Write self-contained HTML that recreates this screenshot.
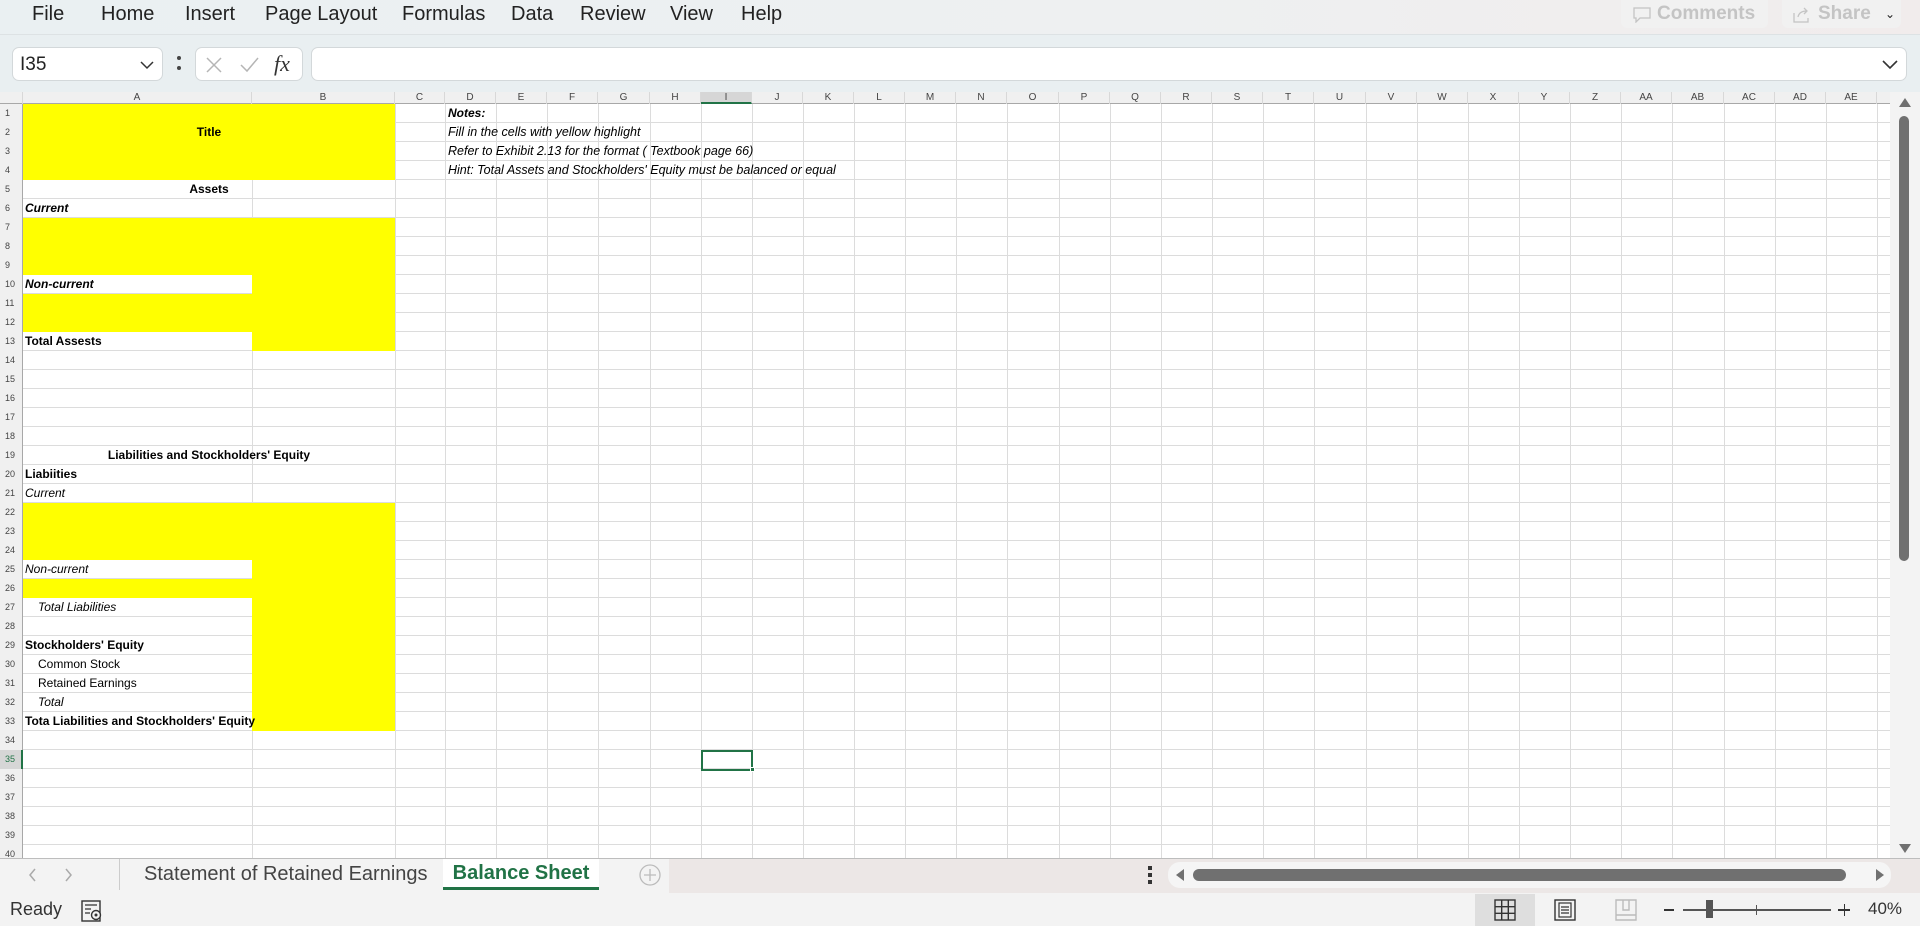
<!DOCTYPE html>
<html><head><meta charset="utf-8"><style>
*{box-sizing:border-box;margin:0;padding:0}
body{width:1920px;height:926px;overflow:hidden;position:relative;background:#e9eff1;font-family:"Liberation Sans",sans-serif}
.a{position:absolute}
.menu{top:0;left:0;width:1920px;height:35px;background:linear-gradient(90deg,#eaf0f2,#eef0f1 60%,#f1ecec);border-bottom:1px solid #dde2e4}
.menu span{position:absolute;top:3px;font-size:20px;color:#222}
.box{background:#fff;border:1px solid #d3d8da;border-radius:7px}
.sheet{left:0;top:92px;width:1890px;height:766px;background:#fff;overflow:hidden}
.hgrid{left:23px;top:12px;width:1867px;height:754px;background:repeating-linear-gradient(to bottom,transparent 0 18px,#dcdcdc 18px 19px)}
.vl{top:12px;width:1px;height:754px;background:#dcdcdc}
.ch{top:0;height:12px;background:#f0f0f0;border-bottom:1px solid #a8a8a8;left:0;width:1890px}
.cl{position:absolute;top:0;height:12px;font-size:10px;color:#444;text-align:center;line-height:12px;border-right:1px solid #d8d8d8}
.rh{left:0;top:12px;width:23px;height:754px;background:#f0f0f0;border-right:1px solid #a8a8a8}
.rn{position:absolute;left:5px;font-size:9px;color:#444;line-height:19px}
.y{background:#ff0;position:absolute}
.t{position:absolute;font-size:12px;line-height:19px;color:#000;white-space:nowrap}
.b{font-weight:bold}.i{font-style:italic}
</style></head><body>
<div class="a menu">
<span style="left:32px">File</span><span style="left:101px">Home</span><span style="left:185px">Insert</span><span style="left:265px">Page Layout</span><span style="left:402px">Formulas</span><span style="left:511px">Data</span><span style="left:580px">Review</span><span style="left:670px">View</span><span style="left:741px">Help</span>
<div class="a" style="left:1621px;top:0;width:147px;height:28px;background:#f1f1f1;border-radius:0 0 6px 6px;color:#c4c4c4;font-size:19px;font-weight:bold;line-height:28px;padding-left:36px">Comments<svg class="a" style="left:12px;top:7px" width="18" height="16" viewBox="0 0 18 16"><path d="M1 1h16v10H7l-4 4v-4H1z" fill="none" stroke="#c4c4c4" stroke-width="1.3"/></svg></div>
<div class="a" style="left:1782px;top:0;width:119px;height:28px;background:#f1f1f1;border-radius:0 0 6px 6px;color:#c4c4c4;font-size:19px;font-weight:bold;line-height:28px;padding-left:36px">Share<span style="position:absolute;left:103px;top:0;font-size:12px;font-weight:normal">&#8964;</span><svg class="a" style="left:11px;top:7px" width="18" height="16" viewBox="0 0 18 16"><path d="M1 6v9h14v-4M5 10c1-5 5-6 9-6M11 1l3 3-3 3" fill="none" stroke="#c4c4c4" stroke-width="1.3"/></svg></div>
</div>
<div class="a box" style="left:12px;top:47px;width:151px;height:34px"><span class="a" style="left:7px;top:6px;font-size:19px;color:#222">I35</span><svg class="a" style="left:127px;top:12px" width="14" height="10"><path d="M1 2l6 6 6-6" fill="none" stroke="#333" stroke-width="1.5"/></svg></div>
<div class="a" style="left:177px;top:56px;width:4px;height:4px;background:#444;border-radius:2px"></div><div class="a" style="left:177px;top:66px;width:4px;height:4px;background:#444;border-radius:2px"></div>
<div class="a box" style="left:195px;top:47px;width:108px;height:34px">
<svg class="a" style="left:9px;top:8px" width="18" height="18"><path d="M2 2l14 14M16 2L2 16" stroke="#b5b5b5" stroke-width="1.5"/></svg>
<svg class="a" style="left:43px;top:8px" width="20" height="18"><path d="M2 9l6 6L19 2" fill="none" stroke="#b5b5b5" stroke-width="1.5"/></svg>
<span class="a" style="left:78px;top:3px;font-family:'Liberation Serif',serif;font-style:italic;font-size:22px;color:#333">fx</span></div>
<div class="a box" style="left:311px;top:47px;width:1596px;height:34px"><svg class="a" style="left:1570px;top:12px" width="16" height="10"><path d="M1 1l7 7 7-7" fill="none" stroke="#333" stroke-width="1.6"/></svg></div>

<div class="a sheet">
<div class="a hgrid"></div>
<div class="a vl" style="left:252px"></div><div class="a vl" style="left:395px"></div><div class="a vl" style="left:445px"></div>
<div class="a vl" style="left:496px"></div><div class="a vl" style="left:547px"></div><div class="a vl" style="left:598px"></div><div class="a vl" style="left:650px"></div><div class="a vl" style="left:701px"></div><div class="a vl" style="left:752px"></div><div class="a vl" style="left:803px"></div><div class="a vl" style="left:854px"></div><div class="a vl" style="left:905px"></div><div class="a vl" style="left:956px"></div><div class="a vl" style="left:1007px"></div><div class="a vl" style="left:1059px"></div><div class="a vl" style="left:1110px"></div><div class="a vl" style="left:1161px"></div><div class="a vl" style="left:1212px"></div><div class="a vl" style="left:1263px"></div><div class="a vl" style="left:1314px"></div><div class="a vl" style="left:1366px"></div><div class="a vl" style="left:1417px"></div><div class="a vl" style="left:1468px"></div><div class="a vl" style="left:1519px"></div><div class="a vl" style="left:1570px"></div><div class="a vl" style="left:1621px"></div><div class="a vl" style="left:1672px"></div><div class="a vl" style="left:1724px"></div><div class="a vl" style="left:1775px"></div><div class="a vl" style="left:1826px"></div><div class="a vl" style="left:1877px"></div>
<div class="y" style="left:23px;top:12px;width:372px;height:76px"></div>
<div class="y" style="left:23px;top:126px;width:372px;height:57px"></div>
<div class="y" style="left:252px;top:183px;width:143px;height:76px"></div>
<div class="y" style="left:23px;top:202px;width:229px;height:38px"></div>
<div class="y" style="left:23px;top:411px;width:372px;height:57px"></div>
<div class="y" style="left:252px;top:468px;width:143px;height:171px"></div>
<div class="y" style="left:23px;top:487px;width:229px;height:19px"></div>
<div class="t b" style="left:23px;width:372px;text-align:center;top:31px">Title</div>
<div class="t b" style="left:23px;width:372px;text-align:center;top:88px">Assets</div>
<div class="t b i" style="left:25px;top:107px">Current</div>
<div class="t b i" style="left:25px;top:183px">Non-current</div>
<div class="t b" style="left:25px;top:240px">Total Assests</div>
<div class="t b" style="left:23px;width:372px;text-align:center;top:354px">Liabilities and Stockholders' Equity</div>
<div class="t b" style="left:25px;top:373px">Liabiities</div>
<div class="t i" style="left:25px;top:392px">Current</div>
<div class="t i" style="left:25px;top:468px">Non-current</div>
<div class="t i" style="left:38px;top:506px">Total Liabilities</div>
<div class="t b" style="left:25px;top:544px">Stockholders' Equity</div>
<div class="t" style="left:38px;top:563px">Common Stock</div>
<div class="t" style="left:38px;top:582px">Retained Earnings</div>
<div class="t i" style="left:38px;top:601px">Total</div>
<div class="t b" style="left:25px;top:620px">Tota Liabilities and Stockholders' Equity</div>
<div class="t b i" style="left:448px;top:12px">Notes:</div>
<div class="t i" style="left:448px;top:31px;font-size:12.5px">Fill in the cells with yellow highlight</div>
<div class="t i" style="left:448px;top:50px;font-size:12.5px">Refer to Exhibit 2.13 for the format ( Textbook page 66)</div>
<div class="t i" style="left:448px;top:69px;font-size:12.5px">Hint: Total Assets and Stockholders' Equity must be balanced or equal</div>
<div class="a" style="left:701px;top:658px;width:52px;height:21px;border:2px solid #217346"></div>
<div class="a" style="left:750px;top:675px;width:5px;height:5px;background:#217346;border:1px solid #fff"></div>
<div class="a ch">
<div class="cl" style="left:0;width:23px"></div>
<div class="cl" style="left:23px;width:229px">A</div><div class="cl" style="left:252px;width:143px">B</div><div class="cl" style="left:395px;width:50px">C</div>
<div class="cl" style="left:445px;width:51px">D</div><div class="cl" style="left:496px;width:51px">E</div><div class="cl" style="left:547px;width:51px">F</div><div class="cl" style="left:598px;width:52px">G</div><div class="cl" style="left:650px;width:51px">H</div><div class="cl" style="left:701px;width:51px;background:#d6d6d6;border-bottom:2px solid #217346">I</div><div class="cl" style="left:752px;width:51px">J</div><div class="cl" style="left:803px;width:51px">K</div><div class="cl" style="left:854px;width:51px">L</div><div class="cl" style="left:905px;width:51px">M</div><div class="cl" style="left:956px;width:51px">N</div><div class="cl" style="left:1007px;width:52px">O</div><div class="cl" style="left:1059px;width:51px">P</div><div class="cl" style="left:1110px;width:51px">Q</div><div class="cl" style="left:1161px;width:51px">R</div><div class="cl" style="left:1212px;width:51px">S</div><div class="cl" style="left:1263px;width:51px">T</div><div class="cl" style="left:1314px;width:52px">U</div><div class="cl" style="left:1366px;width:51px">V</div><div class="cl" style="left:1417px;width:51px">W</div><div class="cl" style="left:1468px;width:51px">X</div><div class="cl" style="left:1519px;width:51px">Y</div><div class="cl" style="left:1570px;width:51px">Z</div><div class="cl" style="left:1621px;width:51px">AA</div><div class="cl" style="left:1672px;width:52px">AB</div><div class="cl" style="left:1724px;width:51px">AC</div><div class="cl" style="left:1775px;width:51px">AD</div><div class="cl" style="left:1826px;width:51px">AE</div>
</div>
<div class="a rh">
<div class="rn" style="top:0">1</div><div class="rn" style="top:19px">2</div><div class="rn" style="top:38px">3</div><div class="rn" style="top:57px">4</div><div class="rn" style="top:76px">5</div><div class="rn" style="top:95px">6</div><div class="rn" style="top:114px">7</div><div class="rn" style="top:133px">8</div><div class="rn" style="top:152px">9</div><div class="rn" style="top:171px">10</div><div class="rn" style="top:190px">11</div><div class="rn" style="top:209px">12</div><div class="rn" style="top:228px">13</div><div class="rn" style="top:247px">14</div><div class="rn" style="top:266px">15</div><div class="rn" style="top:285px">16</div><div class="rn" style="top:304px">17</div><div class="rn" style="top:323px">18</div><div class="rn" style="top:342px">19</div><div class="rn" style="top:361px">20</div><div class="rn" style="top:380px">21</div><div class="rn" style="top:399px">22</div><div class="rn" style="top:418px">23</div><div class="rn" style="top:437px">24</div><div class="rn" style="top:456px">25</div><div class="rn" style="top:475px">26</div><div class="rn" style="top:494px">27</div><div class="rn" style="top:513px">28</div><div class="rn" style="top:532px">29</div><div class="rn" style="top:551px">30</div><div class="rn" style="top:570px">31</div><div class="rn" style="top:589px">32</div><div class="rn" style="top:608px">33</div><div class="rn" style="top:627px">34</div><div class="a" style="left:0;top:646px;width:23px;height:19px;background:#d6d6d6;border-right:2px solid #217346"></div><div class="rn" style="top:646px;color:#217346">35</div><div class="rn" style="top:665px">36</div><div class="rn" style="top:684px">37</div><div class="rn" style="top:703px">38</div><div class="rn" style="top:722px">39</div><div class="rn" style="top:741px">40</div>
</div>
</div>
<div class="a" style="left:1890px;top:92px;width:30px;height:766px;background:#f3f3f3"></div>
<svg class="a" style="left:1898px;top:96px" width="14" height="12"><path d="M1 11L7 2l6 9z" fill="#707070"/></svg>
<div class="a" style="left:1899px;top:116px;width:10px;height:445px;background:#707070;border-radius:5px"></div>
<svg class="a" style="left:1898px;top:843px" width="14" height="12"><path d="M1 1h12L7 10z" fill="#707070"/></svg>
<div class="a" style="left:0;top:858px;width:1920px;height:35px;background:#ece7e6;border-top:1px solid #bdbdbd"></div>
<div class="a" style="left:0;top:859px;width:669px;height:34px;background:#f3f3f3"></div>
<svg class="a" style="left:26px;top:868px" width="50" height="14"><path d="M9 1L4 7l5 6M40 1l5 6-5 6" fill="none" stroke="#aaa" stroke-width="1.5"/></svg>
<div class="a" style="left:119px;top:859px;width:324px;height:31px;border-left:1px solid #ccc;font-size:20px;color:#444;line-height:30px;padding-left:24px">Statement of Retained Earnings</div>
<div class="a" style="left:443px;top:859px;width:156px;height:31px;background:#fff;border-bottom:3px solid #217346;font-size:20px;font-weight:bold;color:#217346;line-height:29px;text-align:center">Balance Sheet</div>
<svg class="a" style="left:639px;top:864px" width="22" height="22"><circle cx="11" cy="11" r="10" fill="none" stroke="#bbb" stroke-width="1.3"/><path d="M11 5v12M5 11h12" stroke="#bbb" stroke-width="1.3"/></svg>
<div class="a" style="left:1148px;top:866px;width:4px;height:4px;background:#333"></div><div class="a" style="left:1148px;top:873px;width:4px;height:4px;background:#333"></div><div class="a" style="left:1148px;top:880px;width:4px;height:4px;background:#333"></div>
<div class="a" style="left:1168px;top:862px;width:723px;height:26px;background:#f5f5f5;border-radius:12px"></div>
<svg class="a" style="left:1174px;top:868px" width="12" height="14"><path d="M10 1L2 7l8 6z" fill="#707070"/></svg>
<div class="a" style="left:1193px;top:869px;width:653px;height:12px;background:#707070;border-radius:6px"></div>
<svg class="a" style="left:1874px;top:868px" width="12" height="14"><path d="M2 1l8 6-8 6z" fill="#707070"/></svg>
<div class="a" style="left:0;top:893px;width:1920px;height:33px;background:#f3f3f3"></div>
<div class="a" style="left:10px;top:899px;font-size:18px;color:#333">Ready</div>
<svg class="a" style="left:80px;top:900px" width="24" height="22"><rect x="2" y="1" width="18" height="20" fill="none" stroke="#333" stroke-width="1.4"/><path d="M5 5h12M5 9h6M5 13h5" stroke="#333" stroke-width="1.3"/><circle cx="16" cy="15" r="4.5" fill="#f3f3f3" stroke="#333" stroke-width="1.4"/><circle cx="16" cy="15" r="1.5" fill="#333"/></svg>
<div class="a" style="left:1475px;top:894px;width:60px;height:32px;background:#dedede"></div>
<svg class="a" style="left:1494px;top:899px" width="22" height="22"><rect x="1" y="1" width="20" height="20" fill="none" stroke="#333" stroke-width="1.4"/><path d="M7.7 1v20M14.3 1v20M1 7.7h20M1 14.3h20" stroke="#333" stroke-width="1.4"/></svg>
<svg class="a" style="left:1554px;top:899px" width="22" height="22"><rect x="1" y="1" width="20" height="20" fill="none" stroke="#333" stroke-width="1.4"/><rect x="5" y="4" width="12" height="14" fill="none" stroke="#333" stroke-width="1.2"/><path d="M7 8h8M7 11h8M7 14h8" stroke="#333" stroke-width="1.2"/></svg>
<svg class="a" style="left:1615px;top:899px" width="22" height="22"><path d="M1 1h20v20H1zM8 1v10h6V1M1 16h20" fill="none" stroke="#bbb" stroke-width="1.4"/></svg>
<div class="a" style="left:1664px;top:909px;width:10px;height:1.5px;background:#333"></div>
<div class="a" style="left:1683px;top:909px;width:148px;height:2px;background:#555"></div>
<div class="a" style="left:1706px;top:900px;width:7px;height:18px;background:#555"></div>
<div class="a" style="left:1756px;top:905px;width:1px;height:10px;background:#555"></div>
<div class="a" style="left:1838px;top:909px;width:12px;height:1.5px;background:#333"></div><div class="a" style="left:1843.5px;top:904px;width:1.5px;height:12px;background:#333"></div>
<div class="a" style="left:1868px;top:899px;font-size:17px;color:#333">40%</div>
</body></html>
